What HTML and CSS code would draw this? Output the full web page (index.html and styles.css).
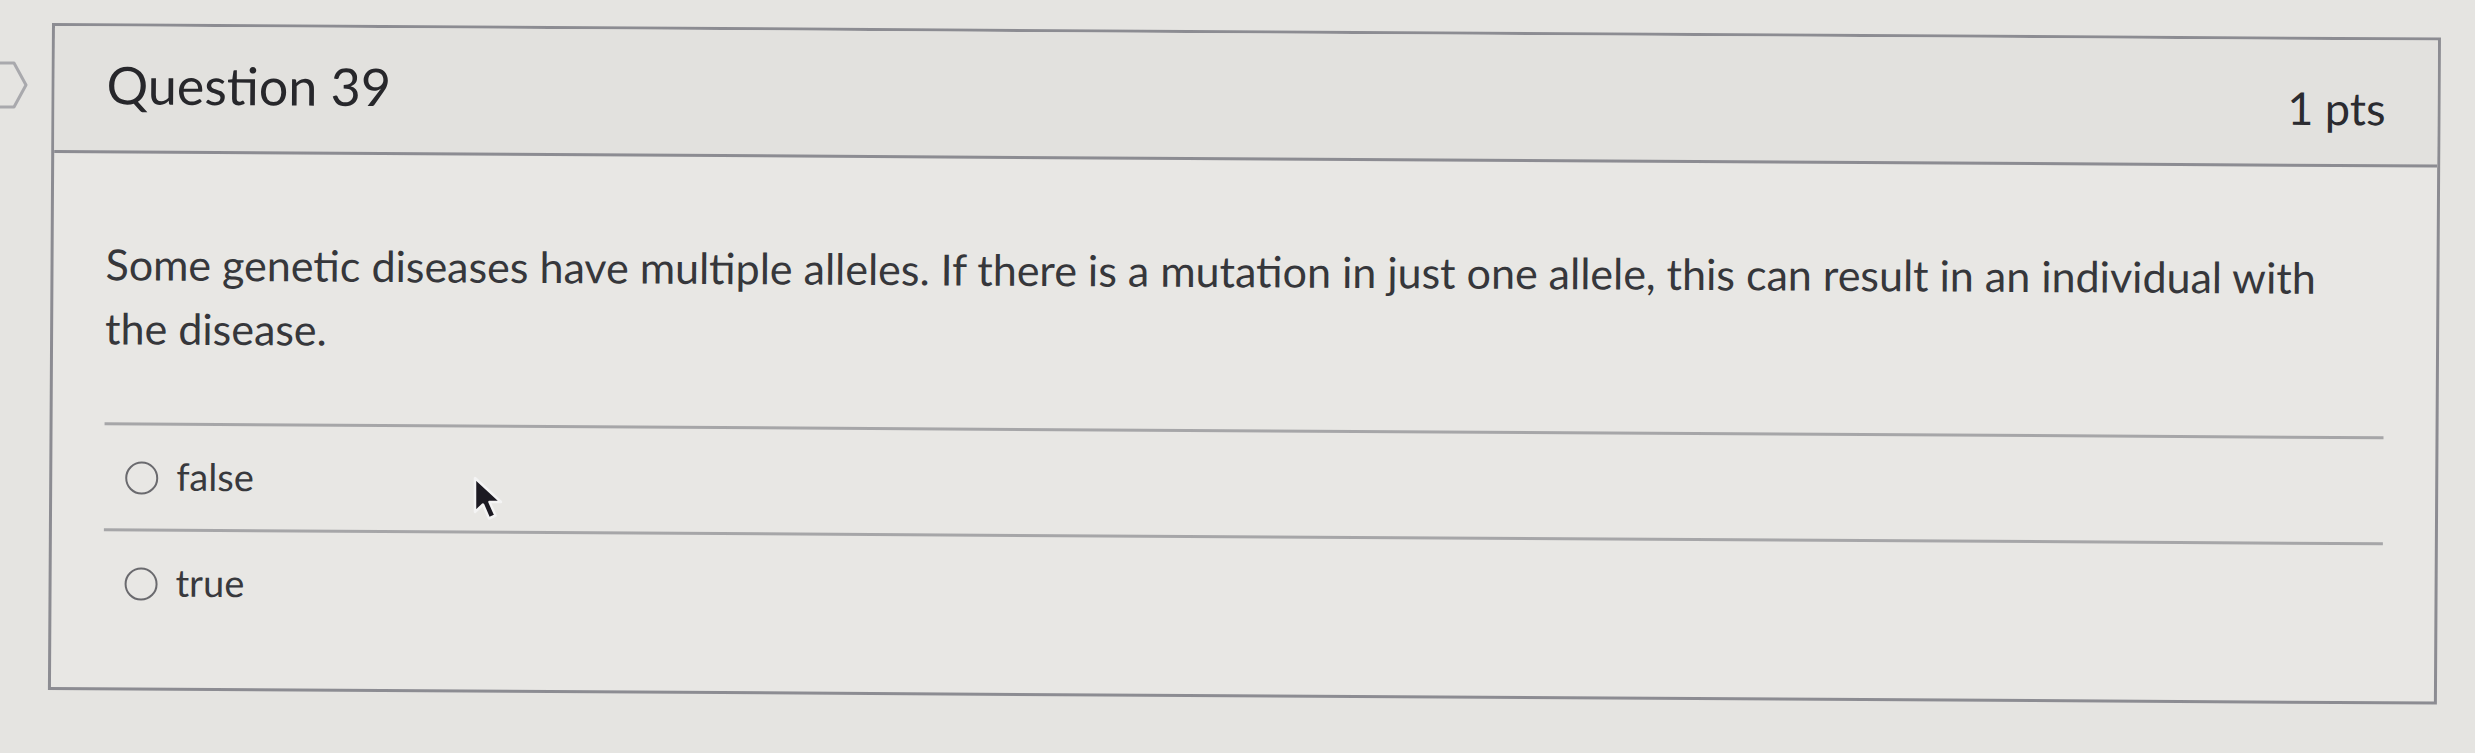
FILE: index.html
```html
<!DOCTYPE html>
<html lang="en">
<head>
<meta charset="utf-8">
<title>Question 39</title>
<link rel="stylesheet" href="styles.css">
</head>
<body>
<div class="page">
  <div class="flag-col">
    <svg class="flag" width="30" height="50" viewBox="0 0 30 50" aria-hidden="true">
      <polyline points="-4,3 14,3 26,25 14,47 -4,47" fill="none" stroke="#a9a9ad" stroke-width="3" stroke-linejoin="round"/>
    </svg>
  </div>
  <div class="card">
    <div class="header">
      <h2 class="qname">Question 39</h2>
      <span class="pts">1 pts</span>
    </div>
    <div class="content">
      <div class="qtext">Some genetic diseases have multiple alleles. If there is a mutation in just one allele, this can result in an individual with the disease.</div>
      <div class="answers">
        <label class="answer"><span class="radio"></span><span class="atext">false</span></label>
        <label class="answer"><span class="radio"></span><span class="atext">true</span></label>
      </div>
    </div>
  </div>
  <svg class="cursor" width="32" height="48" viewBox="0 0 32 48" aria-hidden="true">
    <path d="M2 2 L2 36 L10 28.5 L16 42.5 L22.5 39.5 L16.5 26 L28 26 Z" fill="#1c1a22" stroke="#f4f4f4" stroke-width="2.5" stroke-linejoin="round"/>
  </svg>
</div>
</body>
</html>
```

FILE: styles.css
```css
html, body {
  margin: 0;
  padding: 0;
}
body {
  background: #e5e4e1;
  font-family: Lato, "Open Sans", "Liberation Sans", sans-serif;
  color: #2f3034;
  width: 2475px;
  height: 753px;
  overflow: hidden;
}
.page {
  position: relative;
  display: flex;
  align-items: flex-start;
  padding-top: 23px;
}
.flag-col {
  width: 52px;
  flex: none;
  padding-top: 37px;
}
.flag {
  display: block;
}
.card {
  width: 2389px;
  box-sizing: border-box;
  flex: none;
  border: 3px solid #8c8c92;
  background: #e8e7e4;
  transform: rotate(0.35deg);
  transform-origin: 0 0;
}
.header {
  display: flex;
  justify-content: space-between;
  align-items: center;
  height: 127px;
  padding: 0 52px 0 52px;
  background: #e2e1de;
  border-bottom: 3px solid #8c8c92;
  box-sizing: border-box;
}
.qname {
  margin: 0;
  font-size: 52px;
  font-weight: 400;
  color: #27272b;
  padding-bottom: 8px;
}
.pts {
  font-size: 45px;
  color: #2b2b30;
  padding-top: 12px;
}
.content {
  padding: 79px 52px 53px 52px;
}
.qtext {
  font-size: 43px;
  line-height: 64px;
  color: #36373b;
  padding-right: 40px;
}
.answers {
  margin-top: 62px;
}
.answer {
  display: flex;
  align-items: center;
  gap: 18px;
  height: 106px;
  box-sizing: border-box;
  padding: 0 0 4px 21px;
  border-top: 3px solid #a6a6a8;
  font-size: 38px;
  color: #38393d;
}
.radio {
  width: 29px;
  height: 29px;
  border: 2.5px solid #6a6a6e;
  border-radius: 50%;
  flex: none;
  margin-top: 6px;
}
.cursor {
  position: absolute;
  left: 473px;
  top: 476px;
}
```
